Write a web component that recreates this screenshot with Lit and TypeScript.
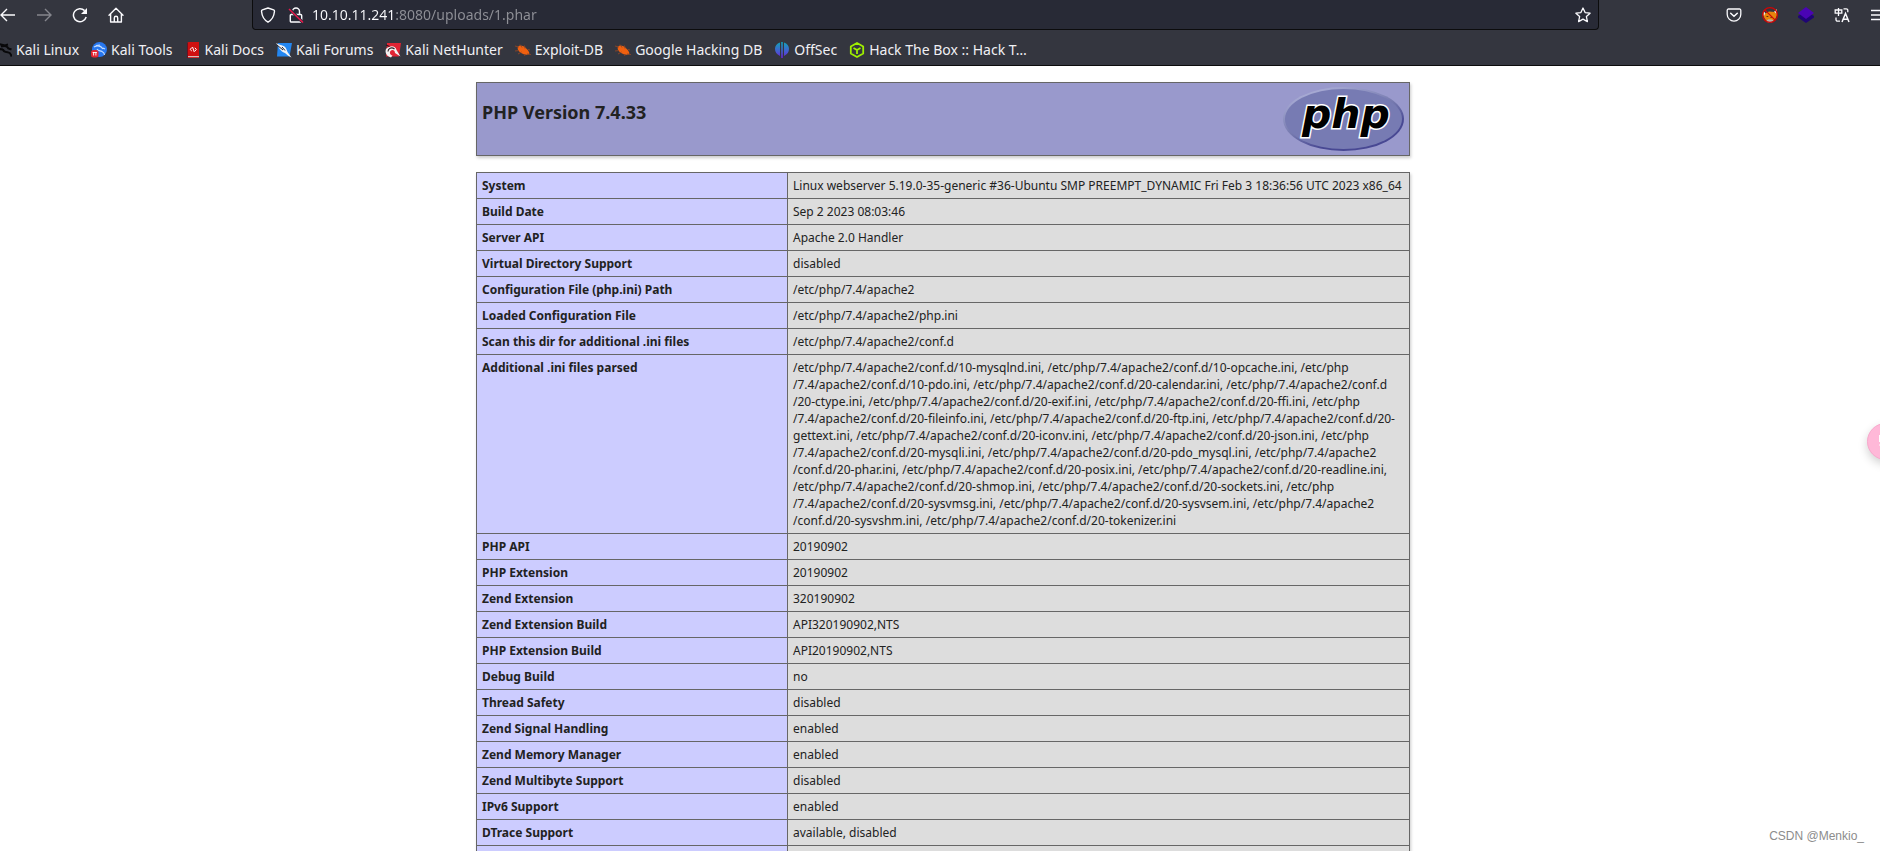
import { LitElement, html, svg, css } from "lit";
import { customElement } from "lit/decorators.js";

const bookmarks = [
  { name: "Kali Linux", icon: "dragon" },
  { name: "Kali Tools", icon: "tools" },
  { name: "Kali Docs", icon: "docs" },
  { name: "Kali Forums", icon: "forums" },
  { name: "Kali NetHunter", icon: "nethunter" },
  { name: "Exploit-DB", icon: "bug" },
  { name: "Google Hacking DB", icon: "bug" },
  { name: "OffSec", icon: "offsec" },
  { name: "Hack The Box :: Hack T…", icon: "cube" },
];

const icons: Record<string, unknown> = {
  back: svg`<path d="M15 8H1M7 2L1 8l6 6" fill="none" stroke="#fbfbfe" stroke-width="1.4"/>`,
  forward: svg`<path d="M1 8h14M9 2l6 6-6 6" fill="none" stroke="#85868d" stroke-width="1.4"/>`,
  reload: svg`<path d="M14.2 10A6.5 6.5 0 1 1 12.600 3.600" fill="none" stroke="#fbfbfe" stroke-width="1.5"/><path d="M15 1v6H9z" fill="#fbfbfe"/>`,
  home: svg`<path d="M1 8.200L8 1.200l7 7M2.600 7v8h10.800V7M6.300 15v-4a1.700 1.700 0 0 1 3.400 0v4" fill="none" stroke="#fbfbfe" stroke-width="1.4" stroke-linejoin="round" stroke-linecap="round"/>`,
  shield: svg`<path d="M8 1l5.600 1.900c.8.300 1 .6.900 1.400C14 9.500 12 13 8 15.200 4 13 2 9.500 1.500 4.300c-.1-.8.100-1.100.900-1.400z" fill="none" stroke="#fbfbfe" stroke-width="1.4" stroke-linejoin="round"/>`,
  lock: svg`<path d="M4.500 7.500V4.500a3.500 3.500 0 0 1 7 0v3M3.300 7.500h9.400a1 1 0 0 1 1 1V14a1 1 0 0 1-1 1H3.300a1 1 0 0 1-1-1V8.500a1 1 0 0 1 1-1z" fill="none" stroke="#fbfbfe" stroke-width="1.4"/><path d="M1.500 2l13.500 13.500" stroke="#282a36" stroke-width="3"/><path d="M1 2l14 13.500" stroke="#e8194b" stroke-width="1.500"/>`,
  star: svg`<path d="M8 1l2.100 4.600 5 .6-3.700 3.400 1 5L8 12.100 3.600 14.600l1-5L.9 6.200l5-.6z" fill="none" stroke="#fbfbfe" stroke-width="1.300" stroke-linejoin="round"/>`,
  pocket: svg`<path d="M2.500 2h11A1.300 1.300 0 0 1 14.800 3.300v4a6.800 6.800 0 0 1-13.600 0v-4A1.300 1.300 0 0 1 2.500 2z" fill="none" stroke="#fbfbfe" stroke-width="1.300"/><path d="M4.700 6.200L8 9.300l3.300-3.100" fill="none" stroke="#fbfbfe" stroke-width="1.500" stroke-linecap="round"/>`,
  fox: svg`<path d="M1 4l2 2.500 4-2 5.500.5L14.500 2l.5 6-1.500 3.500L10 15H5.500L3 12 1.500 9z" fill="#e8840c"/><path d="M4.500 13.500l2-1.200 3 .2 2 1L9.500 15.500H6z" fill="#b9b4ae"/><path d="M1 3.500l2.300 2.800L2 9zM14.500 2.200l-2.300 2.300 2.300 2.500z" fill="#f7eee6"/><path d="M4.500 9.500h1.800M8.500 10.500h1.200" stroke="#5a3210" stroke-width="1.200"/><circle cx="8" cy="8" r="7.400" fill="none" stroke="#d00505" stroke-width="1.200"/><path d="M2.800 2.800l10.400 10.400" stroke="#d00505" stroke-width="1.200"/>`,
  layers: svg`<path d="M0 9l8-5 8 5v1.500L8 16l-8-5.500z" fill="#1f0575"/><path d="M8 0l8 6-8 6-8-6z" fill="#4a04b4"/>`,
  translate: svg`<path d="M1.200 3h6.600v3.200H1.200zM4.500 1v8M2 10.500v2.200a1.500 1.500 0 0 0 1.500 1.500H6M9.500 1.800h2.800a1.500 1.500 0 0 1 1.500 1.500v2" fill="none" stroke="#fbfbfe" stroke-width="1.300"/><path d="M8 15l3.500-8.500L15 15M9.300 12.300h4.500" fill="none" stroke="#fbfbfe" stroke-width="1.500"/>`,
  menu: svg`<path d="M1 3.500h15M1 8h15M1 12.500h15" stroke="#fbfbfe" stroke-width="1.300"/>`,
  dragon: svg`<path d="M3 2l6 1.500 3-1M5 4.500c4-1.500 7 0 7.500 2.600M7 7c0 2 2 3 4.500 3.200 2.500.3 3.500 1.500 4 4.300M12.500 6.500l3 1M3 7l4 .5" fill="none" stroke="#08080a" stroke-width="2"/>`,
  tools: svg`<circle cx="8.500" cy="7.500" r="7.500" fill="#2777ef"/><path d="M3 5c4-2 7-1 9 2M5 3.500l4-.5M6 7c1 2 3 1.500 5 2.500s2.500 2 2.500 3.500M12 6l2 1" fill="none" stroke="#c2dcff" stroke-width="1.200"/><rect x="0" y="8" width="7.500" height="7.500" rx="2.500" fill="#e52631"/><path d="M1.600 10.500h4.300M2.600 10v3.500M4.900 10v3.500" stroke="#fff" stroke-width=".9"/>`,
  docs: svg`<path d="M2 1.200L3.500 0H14v16H2z" fill="#cf1010"/><path d="M2.500 14h11.500v1.200H2.500z" fill="#d8b8b8"/><path d="M2.500 1v15" stroke="#6e1020"/><path d="M6.800 5.500L5.200 7.500l1.600 1.500M9.800 5.800l1.600 1.500-1.600 2M7.500 5l1.800 5" fill="none" stroke="#fff" stroke-width="1"/>`,
  forums: svg`<path d="M2 1h14L13.500 14.500H1z" fill="#2387f2"/><path d="M0 1c3 1.500 5 2 7.500 3 3 1.500 3 3.500 4 6l4 5.500c-3-1-4.500-3-6.500-4.500C6 10 3 7 2.500 4.500z" fill="#f1f3f7"/><path d="M1 3l6 5M6 5l3 3.500" stroke="#222630" stroke-width="1"/>`,
  nethunter: svg`<path d="M2 1h14L14 14.500H1z" fill="#e02434"/><path d="M1 7c4-4 9.500-3.500 10.500 1l4 6.500-5.500-3.500c0-3-3-4-4.500-2s0 4 2 4.500l-1.500 2C2 14.500-.5 11 1 7z" fill="#f4f2f2"/><path d="M1 3l3.500 1.500M3 9.500c0-3 3.500-5 6.500-2.500" fill="none" stroke="#2a1a20" stroke-width="1.100"/>`,
  bug: svg`<path d="M3 4.500c2-2 5.500-.8 8.500 2.200s3.500 5.300 2 5.800c-3 .5-6-.3-8.500-2.300-2-1.600-3-3.700-2-5.700z" fill="#f0600f"/><path d="M0 4l4 1M5 2.500l2 3M9.500 3.500l.5 3M0 9l4-.5M3 12l3.500-2M13 7.500l2 .5M12 12l4 .5M9 12l1 2" stroke="#8c4628" stroke-width=".9"/>`,
  offsec: svg`<defs><linearGradient id="g" x1="0" y1="0" x2="0" y2="1"><stop offset="0" stop-color="#10a4b8"/><stop offset=".6" stop-color="#465bd0"/><stop offset="1" stop-color="#6a20d8"/></linearGradient></defs><path d="M7.200 0v16h1.600V0zM6 .500v13.500C2.500 12.500 1 9.800 1 6.800S2.800 1.500 6 .500zM10 .500v13.500c3.500-1.500 5-4.200 5-7.200S13.200 1.500 10 .500z" fill="url(#g)"/>`,
  cube: svg`<path d="M8 1l6.200 3.500v7L8 15l-6.200-3.500v-7zM4.500 6L8 8l3.500-2M8 8v4" fill="none" stroke="#9fef00" stroke-width="1.800" stroke-linejoin="round"/>`,
};

const icon = (name: string) =>
  html`<svg class="icon" viewBox="0 0 16 16" aria-hidden="true">${icons[name]}</svg>`;

const iniFiles = [
  "10-mysqlnd", "10-opcache", "10-pdo", "20-calendar", "20-ctype", "20-exif", "20-ffi",
  "20-fileinfo", "20-ftp", "20-gettext", "20-iconv", "20-json", "20-mysqli", "20-pdo_mysql",
  "20-phar", "20-posix", "20-readline", "20-shmop", "20-sockets", "20-sysvmsg",
  "20-sysvsem", "20-sysvshm", "20-tokenizer",
];

// Zero-width spaces let the long paths wrap in front of a slash.
const iniList = iniFiles
  .map((file) => `/etc/php\u200b/7.4/apache2\u200b/conf.d\u200b/${file}.ini`)
  .join(", ");

const rows: [string, string][] = [
  ["System", "Linux webserver 5.19.0-35-generic #36-Ubuntu SMP PREEMPT_DYNAMIC Fri Feb 3 18:36:56 UTC 2023 x86_64"],
  ["Build Date", "Sep 2 2023 08:03:46"],
  ["Server API", "Apache 2.0 Handler"],
  ["Virtual Directory Support", "disabled"],
  ["Configuration File (php.ini) Path", "/etc/php/7.4/apache2"],
  ["Loaded Configuration File", "/etc/php/7.4/apache2/php.ini"],
  ["Scan this dir for additional .ini files", "/etc/php/7.4/apache2/conf.d"],
  ["Additional .ini files parsed", iniList],
  ["PHP API", "20190902"],
  ["PHP Extension", "20190902"],
  ["Zend Extension", "320190902"],
  ["Zend Extension Build", "API320190902,NTS"],
  ["PHP Extension Build", "API20190902,NTS"],
  ["Debug Build", "no"],
  ["Thread Safety", "disabled"],
  ["Zend Signal Handling", "enabled"],
  ["Zend Memory Manager", "enabled"],
  ["Zend Multibyte Support", "disabled"],
  ["IPv6 Support", "enabled"],
  ["DTrace Support", "available, disabled"],
  ["", ""],
];

@customElement("browser-chrome")
export class BrowserChrome extends LitElement {
  static styles = css`
    :host {
      display: block;
      background: #34363f;
      color: #f0f0f4;
      border-bottom: 1px solid #0c0c0d;
      font: 14px/20px "Noto Sans", sans-serif;
    }
    .icon { width: 16px; height: 16px; flex: none; display: block; }
    .toolbar { display: flex; align-items: stretch; height: 30px; }
    .nav { display: flex; gap: 20px; width: 252px; flex: none; }
    button {
      display: flex;
      align-items: center;
      padding: 0;
      border: 0;
      background: none;
      color: inherit;
    }
    .address {
      flex: 1;
      display: flex;
      align-items: center;
      gap: 8px;
      padding: 0 7px;
      background: #282a36;
      border: 1px solid #0c0c0d;
      border-top: 0;
      border-radius: 0 0 4px 4px;
    }
    .security { display: flex; gap: 12px; }
    .url {
      flex: 1;
      min-width: 0;
      padding: 0;
      border: 0;
      outline: 0;
      font: inherit;
      color: transparent;
      caret-color: #fbfbfe;
      background: linear-gradient(to right, #fbfbfe 84px, #8f9097 84px);
      background-clip: text;
      -webkit-background-clip: text;
    }
    .tools { display: flex; gap: 20px; padding-left: 127px; flex: none; width: 154px; }
    .bookmarks {
      display: flex;
      gap: 12px;
      padding: 10px 0 5px;
      align-items: center;
      margin-left: -4px;
    }
    .bookmark {
      display: flex;
      align-items: center;
      gap: 4px;
      color: inherit;
      text-decoration: none;
      white-space: nowrap;
    }
  `;

  render() {
    return html`
      <div class="toolbar">
        <div class="nav">
          <button aria-label="Back">${icon("back")}</button>
          <button aria-label="Forward">${icon("forward")}</button>
          <button aria-label="Reload">${icon("reload")}</button>
          <button aria-label="Home">${icon("home")}</button>
        </div>
        <div class="address">
          <div class="security">
            <button aria-label="Tracking protection">${icon("shield")}</button>
            <button aria-label="Connection not secure">${icon("lock")}</button>
          </div>
          <input class="url" type="text" aria-label="Address" .value=${"10.10.11.241:8080/uploads/1.phar"} />
          <button aria-label="Bookmark this page">${icon("star")}</button>
        </div>
        <div class="tools">
          <button aria-label="Pocket">${icon("pocket")}</button>
          <button aria-label="FoxyProxy">${icon("fox")}</button>
          <button aria-label="Layers">${icon("layers")}</button>
          <button aria-label="Translate">${icon("translate")}</button>
          <button aria-label="Menu">${icon("menu")}</button>
        </div>
      </div>
      <nav class="bookmarks">
        ${bookmarks.map((b) => html`<a class="bookmark" href="#">${icon(b.icon)}<span>${b.name}</span></a>`)}
      </nav>
    `;
  }
}

@customElement("php-info")
export class PhpInfo extends LitElement {
  static styles = css`
    :host {
      display: block;
      padding: 16px 0 0 6px;
      color: #222;
      font: 12px/17px "Noto Sans", sans-serif;
    }
    .center { max-width: 934px; margin: 0 auto; }
    .banner {
      display: flex;
      justify-content: space-between;
      align-items: flex-start;
      padding: 4px 5px;
      margin-bottom: 16px;
      background: #9999cc;
      border: 1px solid #666;
      box-shadow: 1px 2px 3px #ccc;
    }
    .title { margin: 13px 0 0; font-size: 18px; line-height: 25px; font-weight: 700; }
    .logo { display: block; width: 121px; height: 64px; }
    .wordmark {
      font: italic 700 41px "DejaVu Sans", sans-serif;
      fill: #000;
      stroke: #fff;
      stroke-width: 3px;
      paint-order: stroke;
    }
    table {
      width: 100%;
      border-collapse: collapse;
      table-layout: fixed;
      box-shadow: 1px 2px 3px #ccc;
    }
    th, td {
      border: 1px solid #666;
      padding: 4px 5px;
      height: 17px;
      text-align: left;
      vertical-align: baseline;
    }
    th { width: 300px; background: #ccccff; font-weight: 700; }
    td { background: #dddddd; overflow-wrap: break-word; }
  `;

  render() {
    return html`
      <div class="center">
        <header class="banner">
          <h1 class="title">PHP Version 7.4.33</h1>
          <svg class="logo" viewBox="0 0 121 64" role="img" aria-label="PHP logo">
            <defs>
              <linearGradient id="rim" x1="0.2" y1="0" x2="0.8" y2="1">
                <stop offset="0" stop-color="#b0b3da" />
                <stop offset="0.5" stop-color="#7377ad" />
                <stop offset="0.75" stop-color="#484893" />
              </linearGradient>
            </defs>
            <ellipse cx="60.500" cy="32" rx="60.500" ry="32" fill="url(#rim)" />
            <ellipse cx="60.500" cy="32" rx="58.500" ry="30" fill="#777bb3" />
            <text class="wordmark" x="19" y="41">php</text>
          </svg>
        </header>
        <table>
          <tbody>
            ${rows.map(([name, value]) => html`<tr><th scope="row">${name}</th><td>${value}</td></tr>`)}
          </tbody>
        </table>
      </div>
    `;
  }
}

@customElement("app-root")
export class AppRoot extends LitElement {
  static styles = css`
    :host {
      display: block;
      position: relative;
      height: 100vh;
      overflow: hidden;
      background: #fff;
    }
    .bubble {
      position: absolute;
      right: -24px;
      top: 423px;
      width: 37px;
      height: 37px;
      padding: 0;
      border: 1px solid #f8a8cc;
      border-radius: 50%;
      background: #ffb8d8;
      box-shadow: 0 4px 10px #0000002e;
    }
    .glyph { display: block; width: 35px; height: 35px; }
    .credit {
      position: absolute;
      right: 16px;
      bottom: 6px;
      color: #8c8c8c;
      font: 12px/18px "Liberation Sans", sans-serif;
    }
  `;

  render() {
    return html`
      <browser-chrome></browser-chrome>
      <php-info></php-info>
      <button class="bubble" aria-label="Open assistant">
        <svg class="glyph" viewBox="0 0 35 35" aria-hidden="true">
          <path d="M21 12h-9v5h9M12.500 20v2" fill="none" stroke="#fff" stroke-width="2" />
        </svg>
      </button>
      <div class="credit">CSDN @Menkio_</div>
    `;
  }
}
